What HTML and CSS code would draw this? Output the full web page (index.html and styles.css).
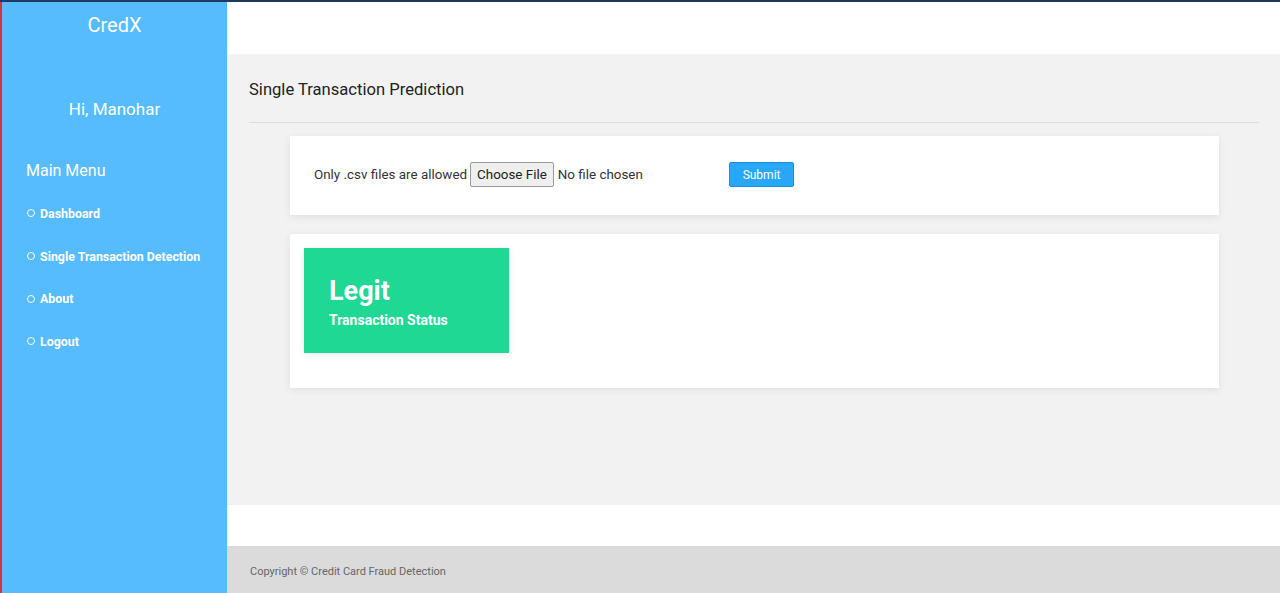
FILE: index.html
```html
<!DOCTYPE html>
<html lang="en">
<head>
  <meta charset="UTF-8">
  <meta name="viewport" content="width=device-width, initial-scale=1.0">
  <title>CredX - Single Transaction Prediction</title>
  <link rel="stylesheet" href="styles.css">
</head>
<body>
  <aside class="sidebar">
    <div class="brand">CredX</div>
    <div class="greeting">Hi, Manohar</div>
    <div class="menu-title">Main Menu</div>
    <ul class="menu">
      <li><span class="dot"></span>Dashboard</li>
      <li><span class="dot"></span>Single Transaction Detection</li>
      <li><span class="dot"></span>About</li>
      <li><span class="dot"></span>Logout</li>
    </ul>
  </aside>

  <div class="main">
    <header class="topbar"></header>

    <section class="content">
      <h2 class="page-title">Single Transaction Prediction</h2>
      <hr class="divider">

      <div class="cards">
        <form class="card upload-card" onsubmit="return false">
          <label class="upload-label">Only .csv files are allowed</label>
          <input class="file-input" type="file" accept=".csv">
          <button class="submit-btn" type="submit">Submit</button>
        </form>

        <div class="card result-card">
          <div class="status-box">
            <div class="status-value">Legit</div>
            <div class="status-label">Transaction Status</div>
          </div>
        </div>
      </div>
    </section>

    <div class="spacer"></div>
    <footer class="footer">Copyright &copy; Credit Card Fraud Detection</footer>
  </div>
</body>
</html>
```

FILE: styles.css
```css
* {
  box-sizing: border-box;
}

body {
  margin: 0;
  height: 593px;
  display: flex;
  font-family: Roboto, "Liberation Sans", sans-serif;
  border-top: 2px solid #1f3a5c;
  background: #fff;
  overflow: hidden;
}

.sidebar {
  width: 227px;
  flex-shrink: 0;
  background: #57bcfd;
  border-left: 2px solid #d6343c;
  color: #fff;
}

.brand {
  text-align: center;
  font-size: 20px;
  padding-top: 11px;
  height: 97px;
}

.greeting {
  text-align: center;
  font-size: 17px;
  height: 52px;
}

.menu-title {
  font-size: 16px;
  padding-left: 24px;
  margin-top: 10px;
}

.menu {
  list-style: none;
  margin: 12px 0 0;
  padding: 0 0 0 25px;
}

.menu li {
  display: flex;
  align-items: center;
  gap: 5px;
  font-size: 12.4px;
  font-weight: 700;
  height: 42.7px;
}

.dot {
  width: 8px;
  height: 8px;
  border: 1.5px solid #fff;
  border-radius: 50%;
}

.main {
  flex: 1;
  display: flex;
  flex-direction: column;
}

.topbar {
  height: 52px;
  background: #fff;
}

.content {
  background: #f2f2f2;
  height: 451px;
  padding: 0 21px 0 22px;
}

.page-title {
  margin: 0;
  padding-top: 26px;
  font-size: 16.6px;
  font-weight: 400;
  color: #222;
}

.divider {
  border: none;
  border-top: 1px solid #dcdcdc;
  margin: 23px 0 0;
}

.cards {
  padding: 13px 40px 0 41px;
}

.card {
  background: #fff;
  box-shadow: 0 2px 8px rgba(0, 0, 0, 0.08);
}

.upload-card {
  height: 79px;
  display: flex;
  align-items: center;
  padding: 0 0 2px 24px;
  font-size: 13.4px;
  color: #333;
  margin: 0 0 19px;
}

.upload-label {
  margin-right: 3px;
}

.file-input {
  font-family: Roboto, "Liberation Sans", sans-serif;
  font-size: 13.4px;
  color: #333;
  width: 259px;
}

.file-input::file-selector-button {
  font-family: Roboto, "Liberation Sans", sans-serif;
  font-size: 13.4px;
  padding: 4px 6px;
  margin-right: 4px;
  border: 1px solid #999;
  border-radius: 2px;
  background: #efefef;
  color: #222;
}

.submit-btn {
  width: 65px;
  height: 25px;
  border: 1px solid #1a90d8;
  border-radius: 2px;
  background: #27a7f5;
  color: #fff;
  font-family: Roboto, "Liberation Sans", sans-serif;
  font-size: 12px;
  cursor: pointer;
}

.result-card {
  height: 154px;
  padding: 14px;
}

.status-box {
  width: 205px;
  height: 105px;
  background: #1ed894;
  color: #fff;
  padding: 27px 0 0 25px;
  box-shadow: 0 2px 8px rgba(0, 0, 0, 0.08);
}

.status-value {
  font-size: 27px;
  font-weight: 700;
}

.status-label {
  font-size: 14px;
  font-weight: 700;
  margin-top: 5px;
}

.spacer {
  height: 41px;
  background: #fff;
}

.footer {
  flex: 1;
  background: #dbdbdb;
  color: #666;
  font-size: 11px;
  padding: 19px 0 0 23px;
}
```
